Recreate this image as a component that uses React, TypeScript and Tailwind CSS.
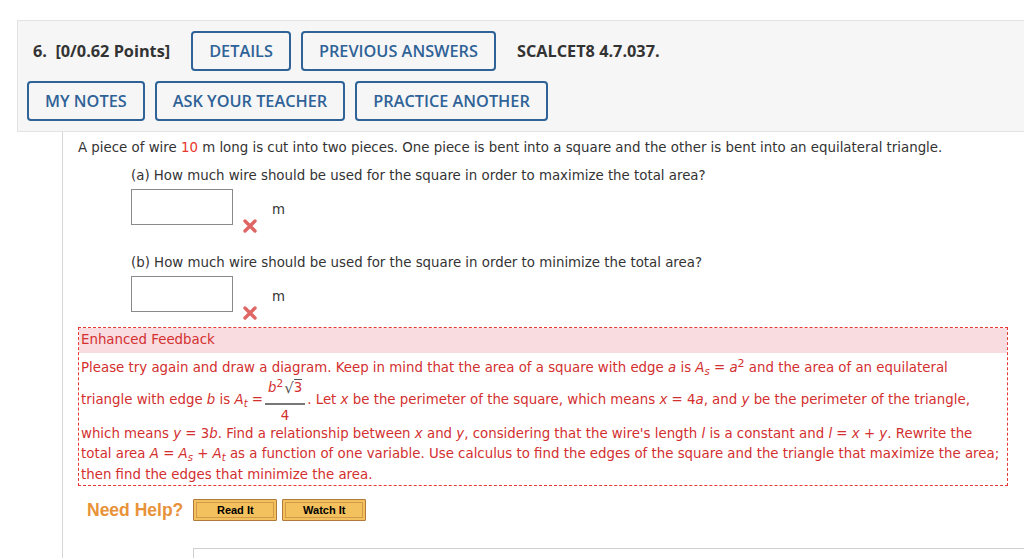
import React from 'react';

const btn =
  'h-10 px-[16px] rounded-[4px] border-2 border-[#2f6297] text-[#2f6297] text-[16.3px] font-semibold bg-[#f6f6f6] leading-none';

const XMark = () => (
  <svg width="14" height="14" viewBox="0 0 14 14" className="block">
    <path d="M2 2 L12 12 M12 2 L2 12" stroke="#e06666" strokeWidth="3.4" strokeLinecap="round" />
  </svg>
);

const AnswerRow = () => (
  <div className="flex items-start ml-[53px]">
    <div className="w-[102px] h-[36px] border border-[#8a8a8a] bg-white" />
    <div className="mt-[30px] ml-[10px]">
      <XMark />
    </div>
    <span className="ml-[15px] mt-[11px]">m</span>
  </div>
);

const HelpButton = ({ label }: { label: string }) => (
  <button className="w-[84px] h-[22px] border border-[#b27a3a] bg-[#f3c15e] p-[2px] rounded-[1px]">
    <span className="flex h-full w-full items-center justify-center border border-[#d29a48] text-[11px] font-bold text-black font-['Liberation_Sans',sans-serif]">
      {label}
    </span>
  </button>
);

const Fraction = () => (
  <span className="flex flex-col items-center mx-[2px] leading-none">
    <span className="flex items-end px-[3px] h-[17px]">
      <i className="mb-[1px]">b</i>
      <span className="text-[10.5px] self-start -mt-[1px]">2</span>
      <span className="text-[15px] ml-[1px] text-[#555] leading-none">√</span>
      <span className="border-t border-[#555] pt-[1px] mb-[1px] leading-none">3</span>
    </span>
    <span className="w-full h-[2px] bg-[#777] mt-[7px]" />
    <span className="mt-[4px] mb-[1px]">4</span>
  </span>
);

export default function App() {
  return (
    <div className="w-[1024px] h-[558px] overflow-hidden bg-white font-['DejaVu_Sans',Verdana,sans-serif]">
      <div className="h-[20px]" />
      {/* Header */}
      <div className="ml-[17px] bg-[#f6f6f6] border border-[#e3e3e3] border-r-0 pt-[10px] pb-[10px] pl-[9px] font-['Open_Sans',sans-serif]">
        <div className="flex items-center">
          <span className="ml-[6px] text-[16.3px] font-bold text-[#333]">6.&nbsp; [0/0.62 Points]</span>
          <button className={btn + ' ml-[21px]'}>DETAILS</button>
          <button className={btn + ' ml-[10px]'}>PREVIOUS ANSWERS</button>
          <span className="ml-[21px] text-[16.3px] font-bold text-[#333]">SCALCET8 4.7.037.</span>
        </div>
        <div className="flex items-center gap-[10px] mt-[10px]">
          <button className={btn}>MY NOTES</button>
          <button className={btn}>ASK YOUR TEACHER</button>
          <button className={btn}>PRACTICE ANOTHER</button>
        </div>
      </div>

      {/* Question body */}
      <div className="ml-[62px] border-l border-[#d6d6d6] pl-[15px] pr-[16px] pt-[8px] pb-[20px] text-[13.35px] text-[#333]">
        <p className="leading-[16px]">
          A piece of wire <span className="text-[#e8382d]">10</span> m long is cut into two pieces. One piece is bent into a
          square and the other is bent into an equilateral triangle.
        </p>
        <p className="ml-[53px] mt-[12px] leading-[16px]">
          (a) How much wire should be used for the square in order to maximize the total area?
        </p>
        <div className="mt-[5px]">
          <AnswerRow />
        </div>
        <p className="ml-[53px] mt-[22px] leading-[16px]">
          (b) How much wire should be used for the square in order to minimize the total area?
        </p>
        <div className="mt-[5px]">
          <AnswerRow />
        </div>

        {/* Feedback */}
        <div className="mt-[7px] border border-dashed border-[#e53935] text-[#d32f2f]">
          <div className="bg-[#f9dcdf] h-[25px] flex items-center px-[2px]">Enhanced Feedback</div>
          <div className="px-[2px] pt-[5px] pb-0 leading-[20.5px]">
            <div className="whitespace-nowrap">
              Please try again and draw a diagram. Keep in mind that the area of a square with edge <i>a</i> is <i>A</i>
              <sub className="italic">s</sub> = <i>a</i>
              <sup className="text-[11px]">2</sup> and the area of an equilateral
            </div>
            <div className="flex items-center whitespace-pre">
              <span>
                triangle with edge <i>b</i> is <i>A</i>
                <sub className="italic">t</sub> =
              </span>
              <Fraction />
              <span>
                . Let <i>x</i> be the perimeter of the square, which means <i>x</i> = 4<i>a</i>, and <i>y</i> be the
                perimeter of the triangle,
              </span>
            </div>
            <div className="mt-[1px] whitespace-nowrap">
              which means <i>y</i> = 3<i>b</i>. Find a relationship between <i>x</i> and <i>y</i>, considering that the
              wire's length <i>l</i> is a constant and <i>l</i> = <i>x</i> + <i>y</i>. Rewrite the
            </div>
            <div className="whitespace-nowrap">
              total area <i>A</i> = <i>A</i>
              <sub className="italic">s</sub> + <i>A</i>
              <sub className="italic">t</sub> as a function of one variable. Use calculus to find the edges of the square
              and the triangle that maximize the area;
            </div>
            <div>then find the edges that minimize the area.</div>
          </div>
        </div>

        {/* Need help */}
        <div className="flex items-center mt-[11px] ml-[9px]">
          <span className="text-[17.5px] font-bold text-[#e8923a] font-['Liberation_Sans',sans-serif]">Need Help?</span>
          <div className="ml-[10px] flex gap-[5px]">
            <HelpButton label="Read It" />
            <HelpButton label="Watch It" />
          </div>
        </div>

        <div className="ml-[115px] mt-[24px] h-[40px] border border-[#cfcfcf] border-r-0 -mr-[16px]" />
      </div>
    </div>
  );
}
